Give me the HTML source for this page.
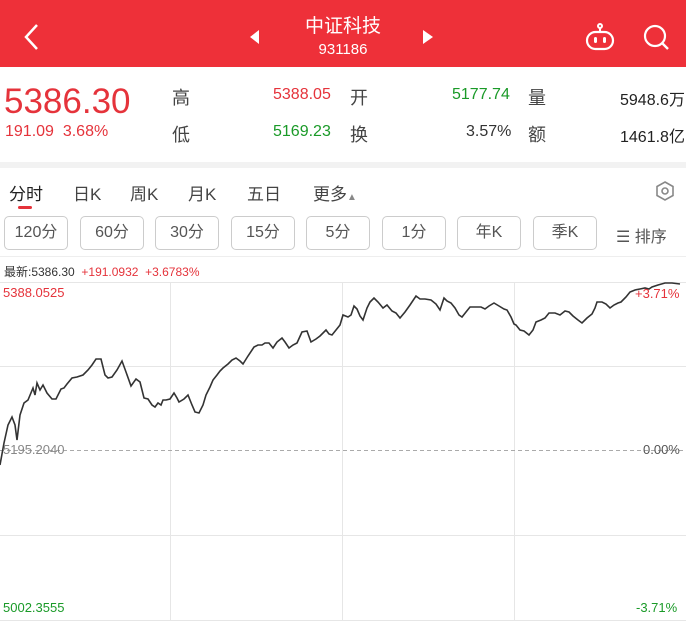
<!DOCTYPE html>
<html><head><meta charset="utf-8"><style>
*{margin:0;padding:0;box-sizing:border-box}
body{width:686px;height:623px;overflow:hidden;background:#fff;font-family:"Liberation Sans","Noto Sans CJK SC",sans-serif;position:relative;color:#333}
.a{position:absolute;white-space:nowrap}
.hdr{position:absolute;left:0;top:0;width:686px;height:67px;background:#ee3039}
.red{color:#e5333b}.grn{color:#1a9a28}
.btn{position:absolute;top:216px;height:34px;border:1px solid #ccc;border-radius:5px;font-size:16px;color:#555;text-align:center;line-height:32px}
</style></head><body>
<div class="hdr"></div>
<svg class="a" style="left:22px;top:22px" width="20" height="30"><path d="M15 3 L4 15 L15 27" stroke="#fff" stroke-width="2.5" fill="none"/></svg>
<div class="a" style="left:0;width:686px;top:11px;text-align:center;color:#fff;font-size:19px">中证科技</div>
<div class="a" style="left:0;width:686px;top:41px;text-align:center;color:#fff;font-size:15px">931186</div>
<svg class="a" style="left:250px;top:30px" width="10" height="14"><path d="M9 0 L0 7 L9 14Z" fill="#fff"/></svg>
<svg class="a" style="left:423px;top:30px" width="10" height="14"><path d="M0 0 L10 7 L0 14Z" fill="#fff"/></svg>
<svg class="a" style="left:584px;top:22px" width="32" height="30"><circle cx="16" cy="4" r="2" fill="none" stroke="#fff" stroke-width="2"/><path d="M16 6 V10" stroke="#fff" stroke-width="2"/><rect x="3" y="10" width="26" height="17" rx="8.5" fill="none" stroke="#fff" stroke-width="2.2"/><rect x="10" y="15" width="3" height="6" rx="1.5" fill="#fff"/><rect x="19" y="15" width="3" height="6" rx="1.5" fill="#fff"/></svg>
<svg class="a" style="left:642px;top:24px" width="28" height="28"><circle cx="13" cy="12" r="10" fill="none" stroke="#fff" stroke-width="2.2"/><path d="M20 19 L26 25" stroke="#fff" stroke-width="2.4"/></svg>

<div class="a red" style="left:4px;top:82px;font-size:35px;font-weight:500">5386.30</div>
<div class="a red" style="left:5px;top:123px;font-size:16px">191.09&nbsp; 3.68%</div>
<div class="a" style="left:172px;top:84px;font-size:18px;color:#444">高</div>
<div class="a" style="left:172px;top:121px;font-size:18px;color:#444">低</div>
<div class="a red" style="left:273px;top:86px;font-size:16px">5388.05</div>
<div class="a grn" style="left:273px;top:123px;font-size:16px">5169.23</div>
<div class="a" style="left:350px;top:84px;font-size:18px;color:#444">开</div>
<div class="a" style="left:350px;top:121px;font-size:18px;color:#444">换</div>
<div class="a grn" style="left:452px;top:86px;font-size:16px">5177.74</div>
<div class="a" style="left:466px;top:123px;font-size:16px;color:#333">3.57%</div>
<div class="a" style="left:528px;top:84px;font-size:18px;color:#444">量</div>
<div class="a" style="left:528px;top:121px;font-size:18px;color:#444">额</div>
<div class="a" style="left:620px;top:86px;font-size:16px;color:#222">5948.6万</div>
<div class="a" style="left:620px;top:123px;font-size:16px;color:#222">1461.8亿</div>
<div class="a" style="left:0;top:162px;width:686px;height:6px;background:#f2f2f2"></div>

<div class="a" style="left:9px;top:180px;font-size:17px;color:#222">分时</div>
<div class="a" style="left:18px;top:206px;width:14px;height:3px;background:#e5333b;border-radius:2px"></div>
<div class="a" style="left:73px;top:180px;font-size:17px;color:#444">日K</div>
<div class="a" style="left:130px;top:180px;font-size:17px;color:#444">周K</div>
<div class="a" style="left:188px;top:180px;font-size:17px;color:#444">月K</div>
<div class="a" style="left:247px;top:180px;font-size:17px;color:#444">五日</div>
<div class="a" style="left:313px;top:180px;font-size:17px;color:#444">更多<span style="font-size:10px;color:#888">▲</span></div>
<svg class="a" style="left:654px;top:180px" width="22" height="22"><path d="M11 2 L19 6.5 V15.5 L11 20 L3 15.5 V6.5Z" fill="none" stroke="#888" stroke-width="1.6"/><circle cx="11" cy="11" r="3" fill="none" stroke="#888" stroke-width="1.6"/></svg>

<div class="btn" style="left:4px;width:64px">120分</div>
<div class="btn" style="left:80px;width:64px">60分</div>
<div class="btn" style="left:155px;width:64px">30分</div>
<div class="btn" style="left:231px;width:64px">15分</div>
<div class="btn" style="left:306px;width:64px">5分</div>
<div class="btn" style="left:382px;width:64px">1分</div>
<div class="btn" style="left:457px;width:64px">年K</div>
<div class="btn" style="left:533px;width:64px">季K</div>
<div class="a" style="left:616px;top:223px;font-size:16px;color:#555">☰ 排序</div>
<div class="a" style="left:0;top:256px;width:686px;height:1px;background:#eee"></div>
<div class="a" style="left:4px;top:263px;font-size:12px;color:#333">最新:5386.30 <span class="red">&nbsp;+191.0932 &nbsp;+3.6783%</span></div>

<svg class="a" style="left:0;top:280px" width="686" height="343">
<g stroke="#e6e6e6" stroke-width="1" fill="none">
<path d="M0 2.5H686M0 86.5H686M0 255.5H686M0 340.5H686M170.5 2V341M342.5 2V341M514.5 2V341"/>
</g>
<path d="M0 170.5H686" stroke="#aaa" stroke-dasharray="4,3"/>
<g transform="translate(0,-280)">
<polyline fill="none" stroke="#333" stroke-width="1.6" points="0,465 4,443 8,425 12,417 15,425 17,440 20,415 24,403 28,400 33,388 35,395 37,383 40,390 43,385 47,393 52,399 56,399 61,389 64,388 67,384 72,378 77,377 83,375 88,370 92,365 96,359 101,359 105,375 108,378 112,377 117,370 122,361 126,372 131,386 136,379 140,382 144,398 148,399 152,405 155,407 158,403 161,405 163,400 166,400 170,399 174,393 177,398 179,402 184,399 188,395 192,405 195,412 199,413 203,405 206,395 210,387 213,380 217,375 220,371 223,368 228,364 232,360 236,358 240,361 243,364 248,356 254,347 258,345 262,345 265,343 269,343 273,348 277,342 282,338 285,342 289,348 293,345 297,343 302,332 307,331 311,342 316,339 320,336 326,330 329,334 332,335 336,330 340,325 343,315 348,317 351,315 354,306 357,309 360,316 363,320 367,308 370,302 374,298 378,302 383,308 387,305 392,311 396,313 400,318 405,312 410,305 416,296 420,299 425,299 431,300 436,304 440,310 444,298 447,301 451,303 455,308 459,315 462,317 466,312 470,307 476,307 481,307 485,309 489,306 494,303 499,306 504,309 507,310 511,317 514,324 516,325 520,330 524,331 529,335 533,330 536,322 541,320 545,318 549,313 555,313 560,315 565,311 569,312 573,316 578,320 582,323 587,318 592,314 595,308 597,302 602,302 606,304 610,308 614,305 618,303 621,302 626,297 630,292 635,290 640,289 645,288 649,289 652,287 658,285 665,283 672,283 680,284"/>
</g>
</svg>
<div class="a red" style="left:3px;top:285px;font-size:13px">5388.0525</div>
<div class="a red" style="left:635px;top:286px;font-size:13px">+3.71%</div>
<div class="a" style="left:3px;top:442px;font-size:13px;color:#888">5195.2040</div>
<div class="a" style="left:643px;top:442px;font-size:13px;color:#555">0.00%</div>
<div class="a grn" style="left:3px;top:600px;font-size:13px">5002.3555</div>
<div class="a grn" style="left:636px;top:600px;font-size:13px">-3.71%</div>
</body></html>
